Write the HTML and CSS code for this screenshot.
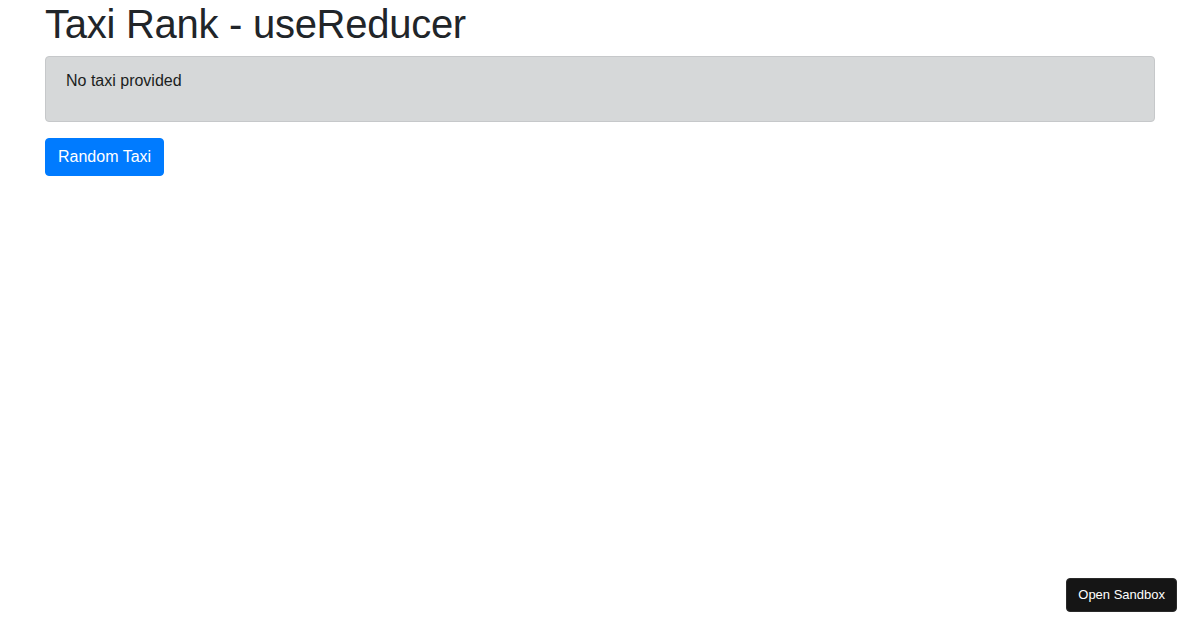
FILE: index.html
```html
<!DOCTYPE html>
<html lang="en">
<head>
    <meta charset="UTF-8">
    <meta name="viewport" content="width=device-width, initial-scale=1.0">
    <title>Taxi Rank - useReducer</title>
    <link rel="stylesheet" href="styles.css">
</head>
<body>

    <div class="container">
        <h1>Taxi Rank - useReducer</h1>

        <div class="alert">
            <p>No taxi provided</p>
        </div>

        <button class="btn" type="button">Random Taxi</button>
    </div>

    <a class="open-sandbox" href="#">Open Sandbox</a>

</body>
</html>
```

FILE: styles.css
```css
* {
    box-sizing: border-box;
}
body {
    margin: 0;
    font-family: "Liberation Sans", Arial, sans-serif;
    font-size: 16px;
    line-height: 1.5;
    color: #212529;
    background-color: #fff;
}
.container {
    max-width: 1140px;
    margin: 0 auto;
    padding: 0 15px;
}
h1 {
    margin: 0 0 8px;
    font-size: 40px;
    font-weight: 500;
    line-height: 1.2;
    letter-spacing: -0.27px;
}
.alert {
    padding: 12px 20px;
    margin-bottom: 16px;
    color: #1b1e21;
    background-color: #d6d8d9;
    border: 1px solid #c6c8ca;
    border-radius: 4px;
}
.alert p {
    margin: 0 0 16px;
}
.btn {
    display: inline-block;
    padding: 6px 12px;
    font-family: inherit;
    font-size: 16px;
    line-height: 1.5;
    color: #fff;
    background-color: #007bff;
    border: 1px solid #007bff;
    border-radius: 4px;
    cursor: pointer;
}
.open-sandbox {
    position: fixed;
    right: 23px;
    bottom: 18px;
    padding: 7px 11px;
    font-size: 13px;
    line-height: 18px;
    color: #fff;
    text-decoration: none;
    background-color: #151515;
    border: 1px solid #2a2a2a;
    border-radius: 4px;
}
```
